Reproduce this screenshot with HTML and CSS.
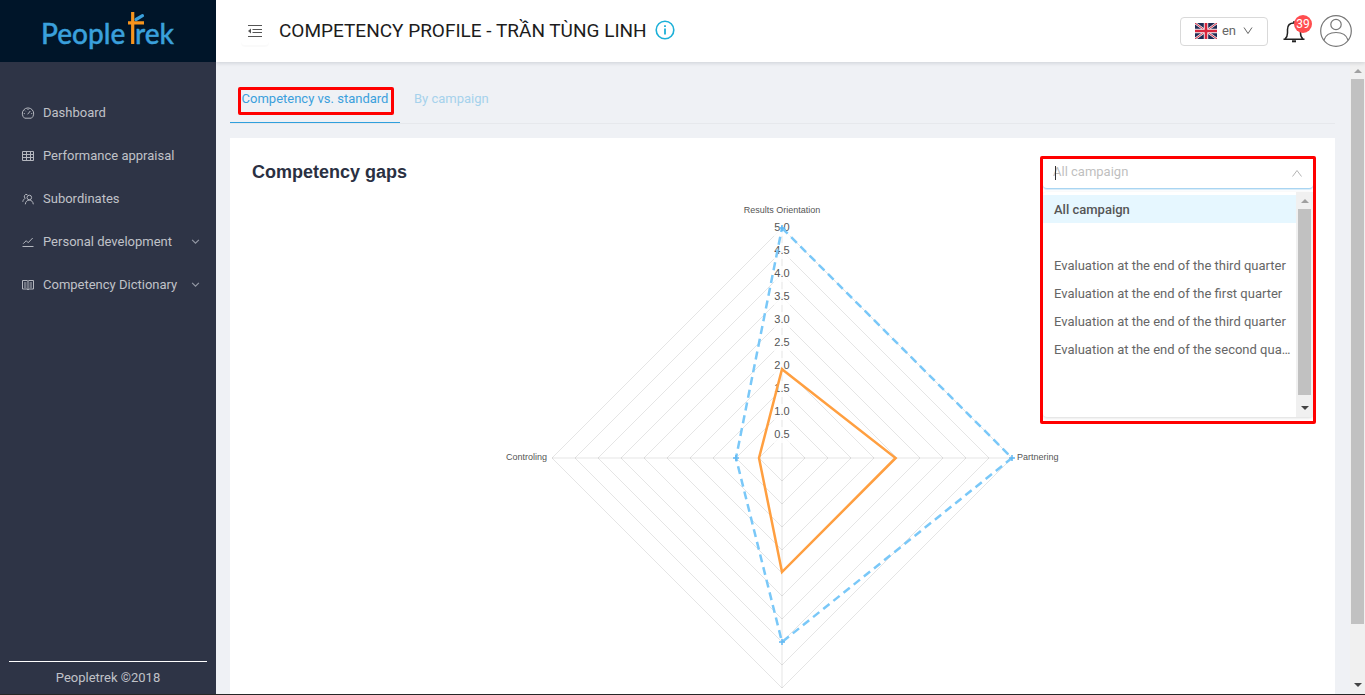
FILE: index.html
```html
<!DOCTYPE html>
<html lang="en">
<head>
<meta charset="utf-8">
<title>Competency profile - Peopletrek</title>
<link rel="stylesheet" href="styles.css">
</head>
<body>
<div class="app">
  <aside class="sidebar">
    <a class="logo" href="#" aria-label="Peopletrek">
      <svg width="136" height="44" viewBox="0 0 136 44">
        <g class="logo-text"><text x="0" y="36">People</text><text x="94" y="36">rek</text></g>
        <path d="M95 11.500l6.500-3.800" stroke="#3aa0dc" stroke-width="3.200" stroke-linecap="round"/>
        <path d="M91.700 4v32M87 14.800h16" stroke="#f7941d" stroke-width="3.200"/>
      </svg>
    </a>
    <nav class="menu">
      <a class="item" href="#">
        <svg class="ico" viewBox="0 0 14 14"><path d="M3.600 12.200a5.700 5.700 0 1 1 6.800 0z"/><path d="M6.600 8.300L9.300 5M2.800 7.600h1M10.200 7.600h1M7 3v1M4 4.600l.7.700"/></svg>
        <span>Dashboard</span>
      </a>
      <a class="item" href="#">
        <svg class="ico" viewBox="0 0 14 14"><path d="M1.500 2.500h11v9h-11zM1.500 5.500h11M1.500 8.500h11M5.500 2.500v9M9.500 2.500v9"/></svg>
        <span>Performance appraisal</span>
      </a>
      <a class="item" href="#">
        <svg class="ico" viewBox="0 0 14 14"><circle cx="8.300" cy="5.500" r="2.300"/><path d="M4.300 12.300c.2-2.500 1.800-4.200 4-4.200s3.800 1.700 4 4.200M6.400 2.700A2 2 0 1 0 4.300 6.300C3 6.900 2 8 1.800 9.800"/></svg>
        <span>Subordinates</span>
      </a>
      <a class="item" href="#">
        <svg class="ico" viewBox="0 0 14 14"><path d="M1.500 11.500h11M2.200 8.700l3-3 2 2 4.500-4.700"/></svg>
        <span>Personal development</span>
        <svg class="arrow" viewBox="0 0 8 8"><path d="M1 2.500l3 3 3-3"/></svg>
      </a>
      <a class="item" href="#">
        <svg class="ico" viewBox="0 0 14 14"><path d="M1.500 2.500H6l1 .7 1-.7h4.500v8.500H8l-1 .8-1-.8H1.500zM7 3.200v8.500M3 5h2.500M3 7h2.500M3 9h2.500M8.500 5H11M8.500 7H11M8.500 9H11"/></svg>
        <span>Competency Dictionary</span>
        <svg class="arrow" viewBox="0 0 8 8"><path d="M1 2.500l3 3 3-3"/></svg>
      </a>
    </nav>
    <footer class="side-foot">Peopletrek ©2018</footer>
  </aside>

  <div class="main">
    <header class="topbar">
      <button class="fold" aria-label="Collapse menu">
        <svg width="16" height="14" viewBox="0 0 16 14"><path d="M1 1.500h14M5.500 5.500H15M5.500 8.500H15M1 12.500h14" stroke="#555" stroke-width="1.200" fill="none"/><path d="M1 7l3-2.500v5z" fill="#555"/></svg>
      </button>
      <h1>COMPETENCY PROFILE - TRẦN TÙNG LINH</h1>
      <button class="info" aria-label="Information">
        <svg width="20" height="20" viewBox="0 0 20 20"><circle cx="10" cy="10" r="8.800" fill="none" stroke="#1cb0d8" stroke-width="1.600"/><path d="M10 8.500v6M10 5.200v1.800" stroke="#1cb0d8" stroke-width="1.800"/></svg>
      </button>
      <div class="tools">
        <button class="lang">
          <svg width="22" height="16" viewBox="0 0 22 16"><path fill="#1f2a52" d="M0 0h22v16H0z"/><path d="M0 0l22 16M22 0L0 16" stroke="#e8e8ee" stroke-width="2.400"/><path d="M0 0l22 16M22 0L0 16" stroke="#d8263c" stroke-width="1"/><path d="M11 0v16M0 8h22" stroke="#f2f2f5" stroke-width="4.400"/><path d="M11 0v16M0 8h22" stroke="#d8263c" stroke-width="2.600"/></svg>
          <span>en</span>
          <svg width="10" height="10" viewBox="0 0 10 10"><path d="M1 1.500l4 6 4-6" fill="none" stroke="#666"/></svg>
        </button>
        <button class="bell" aria-label="Notifications">
          <svg width="24" height="24" viewBox="0 0 24 24" fill="none" stroke="#222" stroke-width="1.500"><path d="M1.500 20.200h21M3 20c1.800-1.500 2.500-3 2.500-6v-3.500c0-4 2.500-6.500 6.500-6.500s6.500 2.500 6.500 6.500V14c0 3 .7 4.500 2.500 6"/><path d="M12 4V2" /><path d="M10 22.300h4" stroke-width="2"/></svg>
          <span class="badge">39</span>
        </button>
        <button class="avatar" aria-label="Account">
          <svg width="32" height="32" viewBox="0 0 32 32" fill="none" stroke="#777" stroke-width="1.200"><circle cx="16" cy="16" r="15.300"/><circle cx="16" cy="9.500" r="5.200"/><path d="M4 25c1.500-5 6-7.500 12-7.500S26.500 20 28 25"/></svg>
        </button>
      </div>
    </header>

    <div class="body">
      <main class="content">
        <div class="tabs" role="tablist">
          <button class="tab active" role="tab" aria-selected="true">Competency vs. standard<span class="tab-mark"></span></button>
          <button class="tab" role="tab" aria-selected="false">By campaign</button>
        </div>
        <section class="card">
          <div class="card-head">
            <h2>Competency gaps</h2>
            <div class="select">
              <input class="field" type="text" role="combobox" aria-label="Campaign" aria-expanded="true" aria-controls="campaigns" placeholder="All campaign">
              <span class="caret"></span>
              <svg class="up" width="12" height="10" viewBox="0 0 12 10"><path d="M1.500 8.500l4.500-6 4.500 6" fill="none" stroke="#b5b5b5"/></svg>
              <div class="drop">
                <ul id="campaigns" role="listbox">
                  <li class="on" role="option" aria-selected="true">All campaign</li>
                  <li role="option"></li>
                  <li role="option">Evaluation at the end of the third quarter</li>
                  <li role="option">Evaluation at the end of the first quarter</li>
                  <li role="option">Evaluation at the end of the third quarter</li>
                  <li role="option">Evaluation at the end of the second qua…</li>
                </ul>
                <div class="bar"><i class="tri-up"></i><i class="thumb"></i><i class="tri-down"></i></div>
              </div>
              <span class="select-mark"></span>
            </div>
          </div>
          <svg class="chart" width="601" height="500" viewBox="-300 -260 601 500" role="img" aria-label="Competency radar chart">
            <g class="grid" id="grid"></g>
            <g class="ticks" id="ticks"></g>
            <g class="names">
              <text x="0" y="-245" text-anchor="middle">Results Orientation</text>
              <text x="235" y="2">Partnering</text>
              <text x="-235" y="2" text-anchor="end">Controling</text>
            </g>
            <polygon class="standard" id="standard"/>
            <g class="standard-points" id="points"></g>
            <polygon class="actual" id="actual"/>
          </svg>
        </section>
      </main>
      <div class="bar page-bar"><i class="tri-up"></i><i class="thumb"></i><i class="tri-down"></i></div>
    </div>
  </div>
</div>
<div class="strip"></div>
<script src="chart.js"></script>
</body>
</html>
```
FILE: styles.css
```css
* { box-sizing: border-box; }
body {
  margin: 0;
  height: 100vh;
  overflow: hidden;
  display: flex;
  flex-direction: column;
  font: 13px/20px Roboto, "Liberation Sans", sans-serif;
  color: #666;
}
button { padding: 0; border: 0; background: none; font: inherit; color: inherit; }
a { color: inherit; text-decoration: none; }
svg { display: block; flex: none; }
.app { flex: 1; min-height: 0; display: flex; }
.strip { height: 1px; background: #262626; }

.sidebar { width: 216px; flex: none; display: flex; flex-direction: column; background: #2e3446; color: #c0c2c8; }
.logo { height: 62px; padding: 8px 0 0 41px; background: #001529; }
.logo-text { font: 500 28px Lato, sans-serif; fill: #3aa0dc; stroke: #3aa0dc; stroke-width: .4px; }
.menu { padding-top: 29px; flex: 1; }
.item { height: 43px; padding: 0 16px 0 21px; display: flex; align-items: center; gap: 8px; }
.item span { flex: 1; }
.ico { width: 14px; height: 14px; fill: none; stroke: #b4b7bf; stroke-width: 1; }
.arrow { width: 9px; height: 9px; fill: none; stroke: #9499a5; }
.side-foot { margin: 0 9px; padding: 6px 0; border-top: 1px solid #fff; text-align: center; }

.main { flex: 1; min-width: 0; display: flex; flex-direction: column; background: #eff1f5; }
.topbar {
  height: 62px; flex: none; padding: 0 13px 0 25px; z-index: 1;
  display: flex; align-items: center;
  background: #fff; box-shadow: 0 1px 4px rgba(0, 21, 41, .15);
}
.fold { width: 28px; height: 28px; display: grid; place-items: center; border-radius: 4px; box-shadow: 0 2px 0 rgba(0, 0, 0, .02); }
h1 { margin: 0 8px 0 10px; font-size: 19px; line-height: 28px; font-weight: 400; color: #1c1c1c; }
.info { margin-bottom: 2px; }
.tools { margin-left: auto; display: flex; align-items: center; gap: 14px; }
.lang { width: 88px; height: 29px; display: flex; align-items: center; justify-content: center; gap: 5px; border: 1px solid #d9d9d9; border-radius: 4px; }
.lang span { margin-right: 2px; }
.bell { position: relative; }
.badge { position: absolute; top: -4px; right: -6px; width: 18px; height: 18px; border-radius: 9px; background: #ff4d4f; color: #fff; font-size: 12px; line-height: 18px; text-align: center; }

.body { flex: 1; min-height: 0; display: flex; }
.content { flex: 1; min-width: 0; padding: 16px 15px 0 14px; overflow: hidden; }
.tabs { display: flex; height: 46px; border-bottom: 1px solid #e6e8ec; }
.tab { position: relative; height: 45px; padding: 0 14px 3px; color: #a6d2ec; }
.tab.active { width: 170px; color: #3ba0dc; border-bottom: 1px solid #2f9fdd; padding: 0 0 2px; }
.tab-mark { position: absolute; left: 8px; top: 9px; width: 156px; height: 28px; border: 3px solid red; border-radius: 2px; }

.card { margin-top: 14px; padding: 20px 22px 0; background: #fff; }
.card-head { display: flex; justify-content: space-between; }
h2 { margin: 0; font: 700 18px/28px "Liberation Sans", sans-serif; color: #2a3042; }
.select { position: relative; width: 270px; height: 30px; }
.field { width: 100%; height: 31px; padding: 0 10px 4px; border: 0; border-bottom: 1px solid #a9d5f2; border-radius: 4px; box-shadow: 0 1px 1px #d6ebf9; font: inherit; outline: none; color: #666; }
.field::placeholder { color: #bfbfbf; }
.caret { position: absolute; left: 12px; top: 8px; width: 1px; height: 14px; background: #333; }
.up { position: absolute; right: 10px; top: 10px; }
.drop { position: absolute; left: 0; right: 0; top: 34px; height: 225px; display: flex; background: #fff; border-radius: 4px; box-shadow: 0 1px 3px rgba(0, 0, 0, .15); }
.drop ul { flex: 1; min-width: 0; margin: 0; padding: 3px 0; list-style: none; }
.drop li { height: 28px; padding: 5px 0 3px 11px; white-space: nowrap; overflow: hidden; text-overflow: ellipsis; }
.drop .on { background: #e6f7ff; font-weight: 500; color: #555; }
.select-mark { position: absolute; left: -3px; right: -3px; top: -2px; height: 268px; border: 3px solid red; border-radius: 2px; }

.bar { width: 17px; flex: none; display: flex; flex-direction: column; align-items: center; padding: 7px 0; gap: 6px; background: #f0f0f0; }
.page-bar { width: 15px; }
.thumb { width: 13px; flex: 1; margin-bottom: 5px; background: #c1c1c1; }
.page-bar .thumb { flex: none; height: calc(100% - 87px); margin-bottom: auto; }
.page-bar .thumb { height: calc(100% - 73px); }
.tri-up, .tri-down { border: 4px solid transparent; }
.tri-up { border-top: 0; border-bottom-color: #a0a0a0; }
.tri-down { border-bottom: 0; border-top-color: #444; }

.chart { margin: 10px auto 0; }
.grid { fill: none; stroke: rgba(0, 0, 0, .1); }
.ticks rect { fill: rgba(255, 255, 255, .75); }
.ticks text { font: 11px "Liberation Sans", sans-serif; fill: #555; text-anchor: middle; }
.names { font: 9px "Liberation Sans", sans-serif; fill: #555; }
.standard { fill: none; stroke: #7ac8f8; stroke-width: 2.5; stroke-dasharray: 8 5; }
.standard-points { stroke: #62b8f2; stroke-width: 1.5; }
.actual { fill: none; stroke: #ff9f40; stroke-width: 2.5; }
```
FILE: chart.js
```js
var step = 23;
function shape(v) {
  return [[0, -v[0]], [v[1], 0], [0, v[2]], [-v[3], 0]].map(function (p) {
    return p[0] * step * 2 + "," + p[1] * step * 2;
  }).join(" ");
}
var grid = '<path d="M-230 0H230M0 -230V230"/>', ticks = "";
for (var i = 1; i <= 10; i++) {
  var v = i / 2, y = -i * step;
  grid += '<polygon points="' + shape([v, v, v, v]) + '"/>';
  ticks += '<rect x="-10" y="' + (y - 8) + '" width="20" height="16"/>' +
    '<text x="0" y="' + (y + 3) + '">' + v.toFixed(1) + "</text>";
}
document.getElementById("grid").innerHTML = grid;
document.getElementById("ticks").innerHTML = ticks;
var standard = [5, 5, 4, 1];
document.getElementById("standard").setAttribute("points", shape(standard));
document.getElementById("actual").setAttribute("points", shape([1.93, 2.47, 2.48, 0.5]));
document.getElementById("points").innerHTML = shape(standard).split(" ").map(function (p) {
  return '<path d="M' + p + 'm-3 0h6m-3 -3v6"/>';
}).join("");
```
